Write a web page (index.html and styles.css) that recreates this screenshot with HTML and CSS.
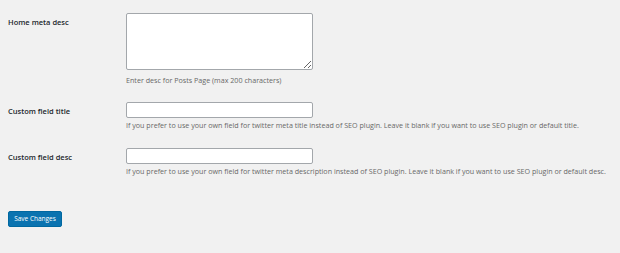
FILE: index.html
```html
<!DOCTYPE html>
<html>
<head>
<meta charset="utf-8">
<link rel="stylesheet" href="styles.css">
</head>
<body>
<form class="form">
  <div class="row row-first">
    <div class="label">Home meta desc</div>
    <div class="field">
      <textarea class="textarea"></textarea>
      <p class="desc desc-first">Enter desc for Posts Page (max 200 characters)</p>
    </div>
  </div>
  <div class="row">
    <div class="label">Custom field title</div>
    <div class="field">
      <input class="input" type="text">
      <p class="desc">If you prefer to use your own field for twitter meta title instead of SEO plugin. Leave it blank if you want to use SEO plugin or default title.</p>
    </div>
  </div>
  <div class="row">
    <div class="label">Custom field desc</div>
    <div class="field">
      <input class="input" type="text">
      <p class="desc">If you prefer to use your own field for twitter meta description instead of SEO plugin. Leave it blank if you want to use SEO plugin or default desc.</p>
    </div>
  </div>
  <div class="actions">
    <button type="button" class="button">Save Changes</button>
  </div>
</form>
</body>
</html>
```

FILE: styles.css
```css
html, body {
  margin: 0;
  padding: 0;
  background: #f1f1f1;
}
body {
  font-family: "Open Sans", "Noto Sans", "Liberation Sans", sans-serif;
  color: #23282d;
  width: 620px;
  height: 253px;
  overflow: hidden;
}
.form {
  display: flex;
  flex-direction: column;
  padding: 13px 0 0 8px;
}
.row {
  display: grid;
  grid-template-columns: 118px 1fr;
  align-items: start;
  margin-bottom: 17px;
}
.row-first {
  margin-bottom: 16px;
}
.label {
  font-size: 7.5px;
  font-weight: 600;
  line-height: 10px;
  padding-top: 3.5px;
  color: #23282d;
}
.field {
  display: flex;
  flex-direction: column;
  align-items: flex-start;
}
.textarea {
  display: block;
  box-sizing: border-box;
  width: 187px;
  height: 57px;
  margin: 0;
  border: 1px solid #a3a7ab;
  border-radius: 2px;
  background: #fff;
  padding: 2px;
}
.input {
  display: block;
  box-sizing: border-box;
  width: 187px;
  height: 16px;
  margin: 0;
  border: 1px solid #a3a7ab;
  border-radius: 2px;
  background: #fff;
  padding: 0 4px;
}
.desc {
  margin: 2px 0 0;
  font-size: 7.15px;
  line-height: 11px;
  color: #686868;
  white-space: nowrap;
}
.desc-first {
  margin-top: 5px;
}
.actions {
  margin-top: 10px;
}
.button {
  box-sizing: border-box;
  width: 54px;
  height: 16px;
  margin: 0;
  padding: 0;
  border: 1px solid #0068a0;
  border-radius: 2px;
  background: #0a73b0;
  color: #fff;
  font-family: "Open Sans", "Noto Sans", "Liberation Sans", sans-serif;
  font-size: 6.5px;
  line-height: 14px;
  text-align: center;
}
```
